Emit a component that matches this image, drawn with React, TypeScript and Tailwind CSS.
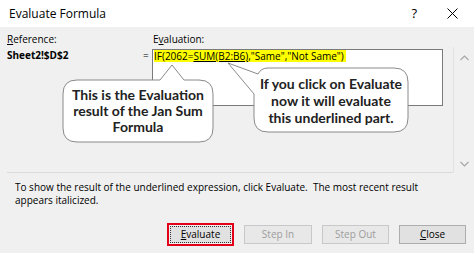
import React from "react";

const ui = { fontFamily: '"Open Sans", "Liberation Sans", sans-serif' };
const callout = { fontFamily: 'Lato, "Liberation Sans", sans-serif' };

const Callouts: React.FC = () => (
  <svg className="absolute left-0 top-0 pointer-events-none" width="474" height="253" viewBox="0 0 474 253">
    {/* left bubble, pointer up to the formula result */}
    <path
      d="M77 80 L160 80 L172 65 L184 80 L199 80 Q213 80 213 94 L213 128 Q213 142 199 142 L77 142 Q63 142 63 128 L63 94 Q63 80 77 80 Z"
      fill="#ffffff"
      stroke="#8a8a8a"
      strokeWidth="1"
    />
    {/* right bubble, pointer to the underlined part */}
    <path
      d="M268 68 L394 68 Q408 68 408 82 L408 118 Q408 132 394 132 L268 132 Q254 132 254 118 L254 94 L228 63 L258 74 Q261 68 268 68 Z"
      fill="#ffffff"
      stroke="#8a8a8a"
      strokeWidth="1"
    />
  </svg>
);

const App: React.FC = () => {
  return (
    <div className="relative w-[474px] h-[253px] bg-[#f0f0f0] flex flex-col overflow-hidden text-black" style={ui}>
      <div className="h-[27px] bg-white flex items-center justify-between pl-[9px] pr-[16px] text-[12px]">
        <span>Evaluate Formula</span>
        <div className="flex items-center gap-[30px]">
          <span className="text-[13px]">?</span>
          <svg width="11" height="11" viewBox="0 0 11 11">
            <path d="M0.5 0.5 L10.5 10.5 M10.5 0.5 L0.5 10.5" stroke="#000" strokeWidth="1" />
          </svg>
        </div>
      </div>

      <div className="flex h-[146px]">
        <div className="flex-1 ml-[7px] border-b border-[#dadada] pt-[6px] text-[10px] leading-[13px]">
          <div className="grid grid-cols-[136px_9px_291px] gap-y-[3px]">
            <span>
              <span className="underline">R</span>eference:
            </span>
            <span />
            <span className="pl-[1px]">
              E<span className="underline">v</span>aluation:
            </span>
            <span className="font-bold">Sheet2!$D$2</span>
            <span>=</span>
            <div className="h-[57px] bg-white border border-[#7a7a7a] px-px">
              <span className="bg-[#ffff00] pr-[2px] leading-[12px] inline-block">
                IF(2062=<span className="underline">SUM(B2:B6)</span>,"Same","Not Same")
              </span>
            </div>
          </div>
        </div>
        <div className="w-[21px] mt-[20px] mb-[1px] border-l border-[#e2e2e2] flex flex-col justify-between items-center pt-[8px] pb-[5px]">
          <svg width="9" height="6" viewBox="0 0 9 6">
            <path d="M0.5 5 L4.5 1 L8.5 5" fill="none" stroke="#a6a6a6" strokeWidth="1.2" />
          </svg>
          <svg width="9" height="6" viewBox="0 0 9 6">
            <path d="M0.5 1 L4.5 5 L8.5 1" fill="none" stroke="#a6a6a6" strokeWidth="1.2" />
          </svg>
        </div>
      </div>

      <p className="pl-[15px] pr-[40px] pt-[8px] text-[10px] leading-[12.5px]">
        To show the result of the underlined expression, click Evaluate.&nbsp; The most recent result appears italicized.
      </p>

      <div className="flex justify-end items-center gap-[10px] pr-[8px] mt-[17px] text-[10px]">
        <div className="border-2 border-[#e3001b] p-px">
          <button className="w-[61px] h-[17px] bg-[#e1e1e1] border border-dotted border-[#333]">
            <span className="underline">E</span>valuate
          </button>
        </div>
        <button className="w-[68px] h-[19px] bg-[#e8e8e8] border border-[#c8c8c8] text-[#9d9d9d]">Step In</button>
        <button className="w-[67px] h-[19px] bg-[#e8e8e8] border border-[#c8c8c8] text-[#9d9d9d]">Step Out</button>
        <button className="w-[67px] h-[19px] bg-[#e1e1e1] border border-[#adadad]">
          <span className="underline">C</span>lose
        </button>
      </div>

      <Callouts />
      <div className="absolute left-[63px] top-[80px] w-[150px] h-[62px] flex items-center justify-center text-center font-bold text-[14px] leading-[16px] text-[#222]" style={callout}>
        This is the Evaluation
        <br />
        result of the Jan Sum
        <br />
        Formula
      </div>
      <div className="absolute left-[254px] top-[68px] w-[154px] h-[64px] flex items-center justify-center text-center font-bold text-[14px] leading-[17px] text-[#222]" style={callout}>
        If you click on Evaluate
        <br />
        now it will evaluate
        <br />
        this underlined part.
      </div>
    </div>
  );
};

export default App;
